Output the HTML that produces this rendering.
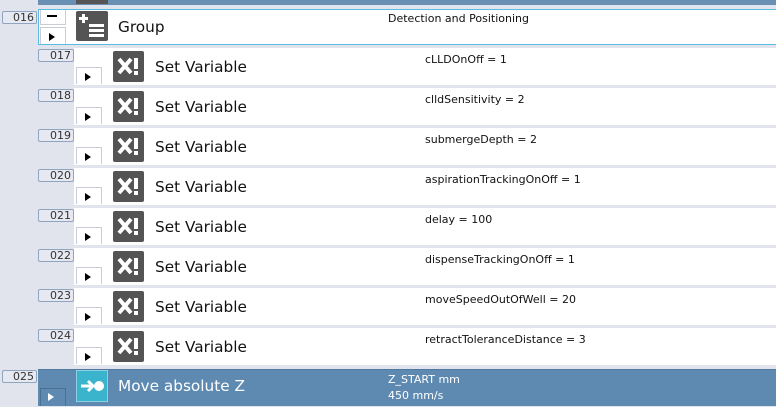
<!DOCTYPE html>
<html><head><meta charset="utf-8"><style>
*{margin:0;padding:0;box-sizing:border-box}
body{width:776px;height:407px;background:#e1e3ed;position:relative;overflow:hidden;font-family:"DejaVu Sans","Liberation Sans",sans-serif;}
.a{position:absolute}
.lbl{position:absolute;height:13px;border:1px solid #8fa4bf;border-radius:2px;background:#e6e9f1;font-size:11px;color:#333;text-align:right;padding-right:2px;line-height:11px}
.arr{position:absolute;width:26px;height:17px;border:1px solid #c9ccd6;border-bottom:none;background:#fff}
.arr:after{content:"";position:absolute;left:8px;top:5px;border-left:6px solid #000;border-top:4px solid transparent;border-bottom:4px solid transparent}
.row{position:absolute;left:74px;right:0;height:37px;background:#fff}
.ic{position:absolute;width:31px;height:31px;background:#545454;border-radius:2px}
.t{position:absolute;font-size:15.3px;color:#111}
.d{position:absolute;font-size:11px;color:#111}
</style></head><body>
<div class="a" style="left:38px;top:0;width:738px;height:5px;background:#6a8fb5"></div>
<div class="a" style="left:76px;top:0;width:32px;height:4px;background:#555"></div>

<div class="lbl" style="left:2px;top:11px;width:35px">016</div>
<div class="a" style="left:38px;top:9px;width:738px;height:36px;background:#fff;border:1px solid #5bbbe0;border-right:none"></div>
<div class="a" style="left:40px;top:10px;width:26px;height:15px;border:1px solid #c9ccd6;border-top:none;background:#fff"></div>
<div class="a" style="left:47px;top:15px;width:10px;height:2px;background:#000"></div>
<div class="arr" style="left:40px;top:27px"></div>
<div class="ic" style="left:76px;top:11px;width:32px;height:30px">
<svg width="32" height="30"><g fill="#fff"><rect x="3" y="6" width="9" height="3"/><rect x="6" y="3" width="3" height="9"/><rect x="13" y="13" width="15" height="3"/><rect x="13" y="18" width="15" height="3"/><rect x="13" y="23" width="15" height="3"/></g></svg></div>
<div class="t" style="left:118px;top:18px">Group</div>
<div class="d" style="left:388px;top:12px">Detection and Positioning</div>

<div id="rows"></div>
<script>
var d=["cLLDOnOff = 1","clldSensitivity = 2","submergeDepth = 2","aspirationTrackingOnOff = 1","delay = 100","dispenseTrackingOnOff = 1","moveSpeedOutOfWell = 20","retractToleranceDistance = 3"];
var h="";
for(var i=0;i<8;i++){var y=48+i*40;
h+='<div class="row" style="top:'+y+'px"></div>';
h+='<div class="lbl" style="left:38px;top:'+(y+1)+'px;width:36px">0'+(17+i)+'</div>';
h+='<div class="arr" style="left:76px;top:'+(y+19)+'px"></div>';
h+='<div class="ic" style="left:113px;top:'+(y+3)+'px"><svg width="31" height="31"><path d="M6 8 L18 22 M18 8 L6 22" stroke="#fff" stroke-width="4"/><rect x="21" y="7" width="4" height="11" fill="#fff"/><rect x="21" y="20" width="4" height="4" fill="#fff"/></svg></div>';
h+='<div class="t" style="left:155px;top:'+(y+10)+'px">Set Variable</div>';
h+='<div class="d" style="left:425px;top:'+(y+5)+'px">'+d[i]+'</div>';}
document.getElementById("rows").innerHTML=h;
</script>

<div class="lbl" style="left:2px;top:370px;width:35px">025</div>
<div class="a" style="left:38px;top:369px;width:738px;height:37px;background:#5e8ab2;border-top:1px solid #4f79a0"></div>
<div class="a" style="left:40px;top:388px;width:26px;height:18px;border:1px solid #4a6f93;border-bottom:none"></div>
<div class="a" style="left:48px;top:393px;border-left:6px solid #fff;border-top:4px solid transparent;border-bottom:4px solid transparent"></div>
<div class="a" style="left:76px;top:370px;width:32px;height:32px;background:#3ab3cc;border:1px solid #8fd0e0">
<svg width="30" height="30"><path d="M4 15 H15 M11 10 L16 15 L11 20" stroke="#fff" stroke-width="3" fill="none"/><circle cx="22" cy="15" r="5" fill="#fff"/></svg></div>
<div class="t" style="left:118px;top:377px;color:#fff">Move absolute Z</div>
<div class="d" style="left:388px;top:373px;color:#fff">Z_START mm</div>
<div class="d" style="left:388px;top:389px;color:#fff">450 mm/s</div>
</body></html>
